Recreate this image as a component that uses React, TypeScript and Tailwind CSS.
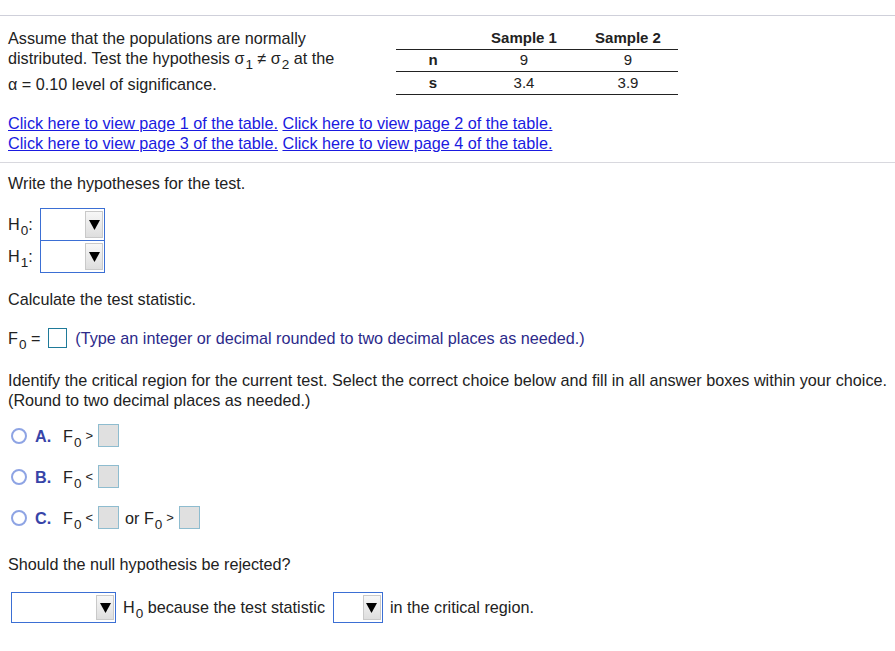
import React from 'react';

const font = { fontFamily: '"Liberation Sans", Arial, sans-serif' };

function Sub({ children }: { children: React.ReactNode }) {
  return <span className="relative top-[5px] ml-[1px] align-baseline text-[13.5px] leading-none">{children}</span>;
}

function Dropdown({ width, height = 30 }: { width: number; height?: number }) {
  return (
    <span
      className="inline-flex items-center justify-end border border-[#3b6fd4] bg-white pr-[1px]"
      style={{ width, height }}
    >
      <span className="flex h-[calc(100%-4px)] w-[18px] items-center justify-center border border-[#c9c9c9] bg-gradient-to-b from-[#f7f7f7] to-[#dedede]">
        <svg width="11" height="11" viewBox="0 0 10 10">
          <polygon points="0,1 10,1 5,10" fill="#000" />
        </svg>
      </span>
    </span>
  );
}

function GrayBox() {
  return <span className="inline-block h-[23px] w-[21px] border border-[#8ebccf] bg-[#e0e0e0] align-middle" />;
}

function Radio() {
  return <span className="block h-[16px] w-[16px] rounded-full border-2 border-[#8ea4e4] bg-white" />;
}

function Option({ letter, children }: { letter: string; children: React.ReactNode }) {
  return (
    <div className="flex h-[24px] items-center">
      <span className="ml-[11px]"><Radio /></span>
      <span className="ml-[8px] w-[28px] font-bold text-[#3744a8]">{letter}</span>
      <span className="flex items-center">{children}</span>
    </div>
  );
}

export default function App() {
  return (
    <div className="min-h-screen bg-white text-[16.2px] leading-[20px] text-[#222]" style={font}>
      <div className="pt-[15px]">
        <div className="border-t border-[#cfd0da]" />
      </div>

      <div className="flex pt-[12px]">
        <div className="ml-[8px] w-[388px]">
          <div>Assume that the populations are normally</div>
          <div>
            distributed. Test the hypothesis σ<Sub>1</Sub> ≠ σ<Sub>2</Sub> at the
          </div>
          <div className="mt-[6px]">α = 0.10 level of significance.</div>
        </div>
        <table className="border-collapse text-center text-[15px]">
          <thead>
            <tr className="h-[21px] border-b border-[#222]">
              <th className="w-[74px]"></th>
              <th className="w-[108px] font-bold">Sample 1</th>
              <th className="w-[100px] font-bold">Sample 2</th>
            </tr>
          </thead>
          <tbody>
            <tr className="h-[22px] border-b border-[#222]">
              <td className="font-bold">n</td>
              <td>9</td>
              <td>9</td>
            </tr>
            <tr className="h-[23px] border-b border-[#222]">
              <td className="font-bold">s</td>
              <td>3.4</td>
              <td>3.9</td>
            </tr>
          </tbody>
        </table>
      </div>

      <div className="ml-[8px] mt-[18px] whitespace-nowrap text-[#1a1ae0]">
        <div>
          <a className="underline">Click here to view page 1 of the table.</a>{' '}
          <a className="underline">Click here to view page 2 of the table.</a>
        </div>
        <div>
          <a className="underline">Click here to view page 3 of the table.</a>{' '}
          <a className="underline">Click here to view page 4 of the table.</a>
        </div>
      </div>

      <div className="mt-[9px] border-t border-[#d8d8de]" />

      <div className="ml-[8px] mt-[10px]">Write the hypotheses for the test.</div>

      <div className="ml-[8px] mt-[15px] flex flex-col">
        <div className="flex items-center">
          <span className="w-[32px]">H<Sub>0</Sub>:</span>
          <Dropdown width={65} height={33} />
        </div>
        <div className="-mt-[1px] flex items-center">
          <span className="w-[32px]">H<Sub>1</Sub>:</span>
          <Dropdown width={65} height={33} />
        </div>
      </div>

      <div className="ml-[8px] mt-[16px]">Calculate the test statistic.</div>

      <div className="ml-[8px] mt-[19px] flex items-center">
        <span>F<Sub>0</Sub> =</span>
        <span className="ml-[8px] inline-block h-[20px] w-[19px] border border-[#1f7a99]" />
        <span className="ml-[8px] text-[#2c2a8a]">(Type an integer or decimal rounded to two decimal places as needed.)</span>
      </div>

      <div className="ml-[8px] mt-[22px] whitespace-nowrap">
        <div>Identify the critical region for the current test. Select the correct choice below and fill in all answer boxes within your choice.</div>
        <div>(Round to two decimal places as needed.)</div>
      </div>

      <div className="mt-[14px] flex flex-col gap-[17px]">
        <Option letter="A.">
          <span>F<Sub>0</Sub></span>
          <span className="ml-[4px] mr-[5px] text-[13px]">&gt;</span>
          <GrayBox />
        </Option>
        <Option letter="B.">
          <span>F<Sub>0</Sub></span>
          <span className="ml-[4px] mr-[5px] text-[13px]">&lt;</span>
          <GrayBox />
        </Option>
        <Option letter="C.">
          <span>F<Sub>0</Sub></span>
          <span className="ml-[4px] mr-[5px] text-[13px]">&lt;</span>
          <GrayBox />
          <span className="ml-[6px]">or F<Sub>0</Sub></span>
          <span className="ml-[4px] mr-[5px] text-[13px]">&gt;</span>
          <GrayBox />
        </Option>
      </div>

      <div className="ml-[8px] mt-[24px]">Should the null hypothesis be rejected?</div>

      <div className="ml-[11px] mt-[18px] flex items-center">
        <Dropdown width={105} height={31} />
        <span className="ml-[7px]">H<Sub>0</Sub> because the test statistic</span>
        <span className="ml-[8px]"><Dropdown width={50} height={31} /></span>
        <span className="ml-[7px]">in the critical region.</span>
      </div>
    </div>
  );
}
